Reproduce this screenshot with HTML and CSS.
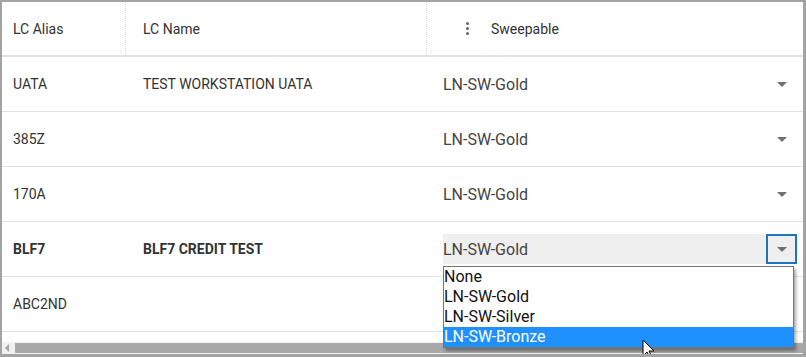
FILE: index.html
```html
<!DOCTYPE html>
<html>
<head>
<meta charset="utf-8">
<link rel="stylesheet" href="styles.css">
</head>
<body>
<div class="frame">
  <div class="grid">
    <div class="row head">
      <div class="cell c1 hd">LC Alias</div>
      <div class="cell c2 hd">LC Name</div>
      <div class="cell c3 hd">
        <span class="kebab"><i></i><i></i><i></i></span>
        <span>Sweepable</span>
      </div>
    </div>
    <div class="row">
      <div class="cell c1">UATA</div>
      <div class="cell c2">TEST WORKSTATION UATA</div>
      <div class="cell c3"><div class="sel"><span>LN-SW-Gold</span><span class="btn"><b class="tri"></b></span></div></div>
    </div>
    <div class="row">
      <div class="cell c1">385Z</div>
      <div class="cell c2"></div>
      <div class="cell c3"><div class="sel"><span>LN-SW-Gold</span><span class="btn"><b class="tri"></b></span></div></div>
    </div>
    <div class="row">
      <div class="cell c1">170A</div>
      <div class="cell c2"></div>
      <div class="cell c3"><div class="sel"><span>LN-SW-Gold</span><span class="btn"><b class="tri"></b></span></div></div>
    </div>
    <div class="row bold">
      <div class="cell c1">BLF7</div>
      <div class="cell c2">BLF7 CREDIT TEST</div>
      <div class="cell c3"><div class="sel active"><span>LN-SW-Gold</span><span class="btn focus"><b class="tri"></b></span></div></div>
    </div>
    <div class="row">
      <div class="cell c1">ABC2ND</div>
      <div class="cell c2"></div>
      <div class="cell c3"></div>
    </div>
  </div>
  <div class="hscroll">
    <span class="larrow"></span>
    <span class="thumb"></span>
  </div>
  <ul class="menu">
    <li>None</li>
    <li>LN-SW-Gold</li>
    <li>LN-SW-Silver</li>
    <li class="hl">LN-SW-Bronze</li>
  </ul>
  <svg class="cursor" width="14" height="20" viewBox="0 0 14 20"><path d="M1 1 L1 17 L5 13 L8 19 L10 18 L7 12 L12 12 Z" fill="#fff" stroke="#000" stroke-width="1"/></svg>
</div>
</body>
</html>
```
FILE: styles.css
```css
html, body { margin: 0; padding: 0; background: #fff; }
.frame {
  position: relative;
  width: 806px;
  height: 357px;
  box-sizing: border-box;
  border: 2px solid #a3a3a3;
  border-right-width: 3px;
  border-bottom-width: 3px;
  overflow: hidden;
  font-family: Roboto, "Liberation Sans", sans-serif;
  color: #333;
}
.grid { display: flex; flex-direction: column; }
.row {
  display: flex;
  height: 54px;
  border-bottom: 1px solid #e2e2e2;
  font-size: 14px;
}
.row.head { height: 53px; border-bottom: 2px solid #e2e2e2; font-size: 14px; }
.row.bold { font-weight: 700; }
.cell { display: flex; align-items: center; box-sizing: border-box; }
.c1 { width: 124px; padding-left: 11px; }
.c2 { width: 301px; padding-left: 17px; }
.c3 { flex: 1; padding-left: 16px; padding-right: 6px; }
.hd.c1, .hd.c2 { border-right: 1px dotted #d4d4d4; }
.kebab { display: flex; flex-direction: column; gap: 2px; margin-left: 23px; margin-right: 22px; }
.kebab i { display: block; width: 3px; height: 3px; border-radius: 50%; background: #666; }
.sel {
  flex: 1;
  height: 30px;
  display: flex;
  align-items: center;
  justify-content: space-between;
  font-size: 16px;
  color: #444;
  font-weight: 400;
}
.sel.active { background: #efefef; }
.btn {
  width: 31px;
  height: 30px;
  box-sizing: border-box;
  display: flex;
  align-items: center;
  justify-content: center;
}
.btn.focus { border: 2px solid #1a74c0; }
.tri {
  width: 0; height: 0;
  border-left: 5px solid transparent;
  border-right: 5px solid transparent;
  border-top: 5px solid #707070;
}
.hscroll {
  position: absolute;
  left: 0; right: 0; top: 340px; height: 12px;
  background: #f1f1f1;
  display: flex;
  align-items: center;
}
.larrow {
  width: 0; height: 0; margin-left: 3px;
  border-top: 4px solid transparent;
  border-bottom: 4px solid transparent;
  border-right: 4px solid #a3a3a3;
}
.thumb { flex: 1; height: 10px; margin-left: 6px; background: #a8a8a8; }
.menu {
  position: absolute;
  left: 441px; top: 264px;
  width: 349px;
  margin: 0; padding: 0;
  list-style: none;
  border: 1px solid #767676;
  background: #fff;
  box-shadow: 2px 3px 3px rgba(0,0,0,0.35);
  font-size: 16px;
  color: #111;
}
.menu li { height: 20px; line-height: 20px; padding-left: 0; }
.menu li.hl { background: #1e90ff; color: #fff; }
.cursor { position: absolute; left: 640px; top: 337px; }
```
